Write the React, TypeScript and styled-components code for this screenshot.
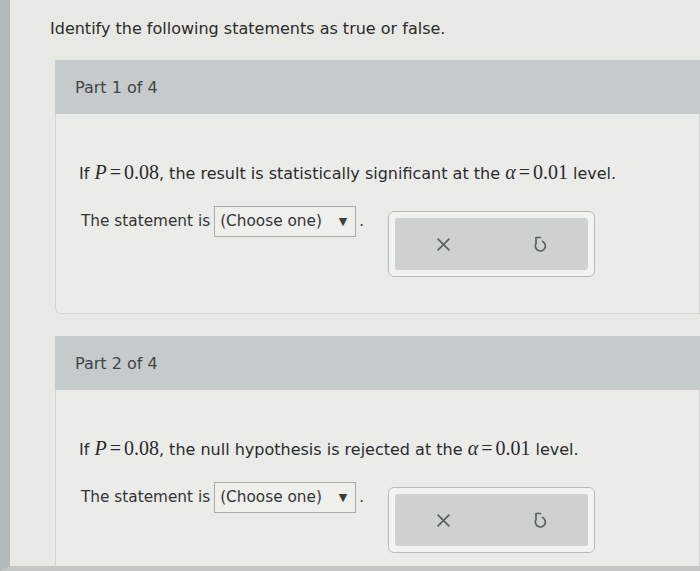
import React from 'react';
import styled, { createGlobalStyle } from 'styled-components';

const GlobalStyle = createGlobalStyle`
  html, body {
    margin: 0;
    padding: 0;
    background: #e7e7e4;
  }
  #root {
    width: 700px;
    height: 571px;
    overflow: hidden;
  }
`;

const Page = styled.div`
  width: 700px;
  height: 571px;
  box-sizing: border-box;
  border-left: 10px solid #b3bbba;
  border-bottom: 5px solid #c2c7c6;
  padding: 18px 0 0 40px;
  background: #e8e8e5;
  font-family: 'DejaVu Sans', Verdana, sans-serif;
  color: #3b3d3d;
  overflow: hidden;
`;

const Title = styled.div`
  font-size: 16px;
  line-height: 22px;
  color: #2a2c2c;
`;

const Stack = styled.div`
  display: flex;
  flex-direction: column;
  gap: 22px;
  margin: 20px 0 0 5px;
`;

const Panel = styled.section`
  display: flex;
  flex-direction: column;
`;

const PanelHeader = styled.div`
  height: 54px;
  background: #c5cbca;
  display: flex;
  align-items: center;
  padding-left: 20px;
  font-size: 16px;
  color: #424545;
`;

const PanelBody = styled.div<{ $height: number }>`
  height: ${(p) => p.$height}px;
  box-sizing: border-box;
  background: #ebebe9;
  border: 1px solid #d3d6d5;
  border-top: none;
  border-radius: 0 0 0 6px;
  padding: 46px 0 0 23px;
`;

const Statement = styled.div`
  font-size: 16px;
  line-height: 24px;
  color: #2a2c2c;
`;

const MathVar = styled.span`
  font-family: 'Liberation Serif', 'Times New Roman', serif;
  font-style: italic;
  font-size: 20px;
`;

const MathNum = styled.span`
  font-family: 'Liberation Serif', 'Times New Roman', serif;
  font-size: 20px;
`;

const MathOp = styled.span`
  font-family: 'Liberation Serif', 'Times New Roman', serif;
  font-size: 20px;
  margin: 0 3px;
`;

const AnswerRow = styled.div`
  display: flex;
  align-items: flex-start;
  margin-top: 20px;
  padding-left: 2px;
`;

const Prompt = styled.div`
  display: flex;
  align-items: center;
  font-size: 15.3px;
  color: #333535;
  height: 30px;
`;

const Select = styled.div`
  display: flex;
  align-items: center;
  justify-content: space-between;
  box-sizing: border-box;
  width: 142px;
  height: 31px;
  margin-left: 4px;
  padding: 0 8px 0 5px;
  background: #efefed;
  border: 1px solid #a9abab;
  font-size: 15.3px;
  color: #333535;
`;

const Caret = styled.span`
  font-size: 11px;
  color: #3a3c3c;
`;

const Period = styled.span`
  margin-left: 3px;
  font-size: 15px;
`;

const Tools = styled.div`
  margin-left: 24px;
  margin-top: 5px;
  width: 207px;
  height: 66px;
  box-sizing: border-box;
  padding: 6px;
  background: #f3f3f1;
  border: 1px solid #b8bbba;
  border-radius: 6px;
`;

const ToolsInner = styled.div`
  height: 100%;
  background: #cdd1d0;
  border-radius: 3px;
  display: grid;
  grid-template-columns: 1fr 1fr;
  align-items: center;
  justify-items: center;
`;

const ToolButton = styled.button`
  border: none;
  background: none;
  padding: 0;
  display: flex;
  color: #586060;
  cursor: pointer;
`;

const CloseIcon = () => (
  <svg width="15" height="15" viewBox="0 0 14 14" fill="none" stroke="currentColor" strokeWidth="1.5">
    <path d="M1.5 1.5 L12.5 12.5 M12.5 1.5 L1.5 12.5" />
  </svg>
);

const UndoIcon = () => (
  <svg width="14" height="18" viewBox="0 0 14 18" fill="none" stroke="currentColor" strokeWidth="1.7" strokeLinecap="round" strokeLinejoin="round">
    <path d="M7.5 2.5 L3 2.5 L3 8.5 A5 5 0 1 0 9.6 6.5" />
  </svg>
);

type Part = {
  label: string;
  clause: string;
  bodyHeight: number;
};

const parts: Part[] = [
  { label: 'Part 1 of 4', clause: 'the result is statistically significant at the', bodyHeight: 200 },
  { label: 'Part 2 of 4', clause: 'the null hypothesis is rejected at the', bodyHeight: 200 },
];

const App = () => {
  return (
    <>
      <GlobalStyle />
      <Page>
        <Title>Identify the following statements as true or false.</Title>
        <Stack>
          {parts.map((part) => (
            <Panel key={part.label}>
              <PanelHeader>{part.label}</PanelHeader>
              <PanelBody $height={part.bodyHeight}>
                <Statement>
                  If <MathVar>P</MathVar>
                  <MathOp>=</MathOp>
                  <MathNum>0.08</MathNum>, {part.clause} <MathVar>α</MathVar>
                  <MathOp>=</MathOp>
                  <MathNum>0.01</MathNum> level.
                </Statement>
                <AnswerRow>
                  <Prompt>
                    The statement is
                    <Select>
                      (Choose one)
                      <Caret>▼</Caret>
                    </Select>
                    <Period>.</Period>
                  </Prompt>
                  <Tools>
                    <ToolsInner>
                      <ToolButton aria-label="Clear">
                        <CloseIcon />
                      </ToolButton>
                      <ToolButton aria-label="Undo">
                        <UndoIcon />
                      </ToolButton>
                    </ToolsInner>
                  </Tools>
                </AnswerRow>
              </PanelBody>
            </Panel>
          ))}
        </Stack>
      </Page>
    </>
  );
};

export default App;
